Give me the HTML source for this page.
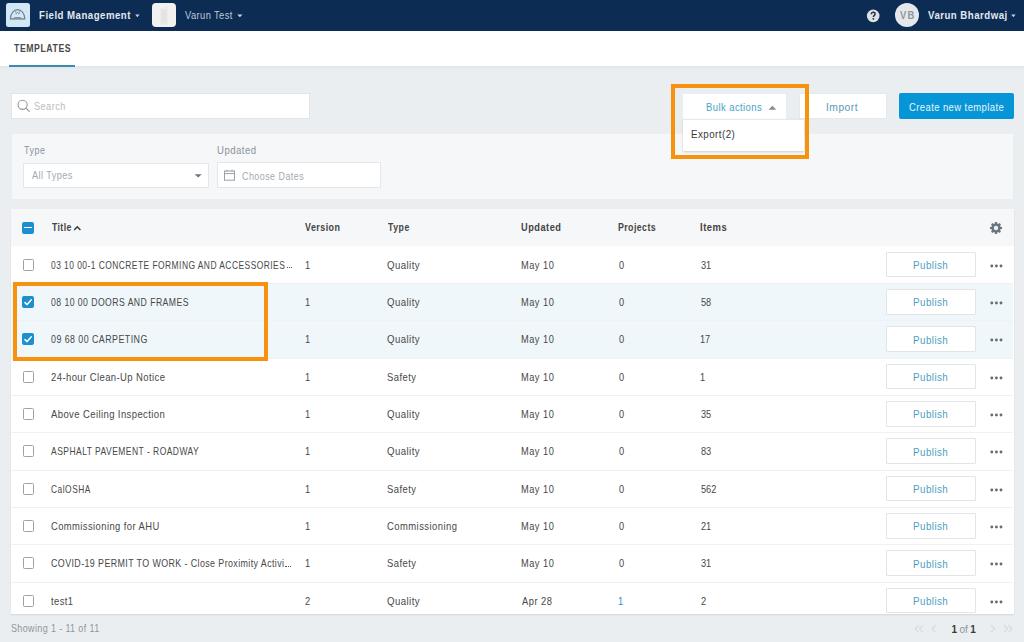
<!DOCTYPE html>
<html><head><meta charset="utf-8">
<style>
*{box-sizing:border-box;margin:0;padding:0}
html,body{width:1024px;height:642px;overflow:hidden;background:#ebeef1;font-family:"Liberation Sans",sans-serif;color:#3c3c3c;position:relative}
.b{position:absolute}
.t{position:absolute;white-space:nowrap;line-height:1;transform-origin:0 0}
#clip{position:absolute;left:0;top:0;width:1024px;height:612.6px;overflow:hidden}
</style></head><body>
<div class="b" style="left:0;top:0;width:1024px;height:31px;background:#0c2c54"></div>
<div class="b" style="left:6px;top:3px;width:24px;height:24px;background:#d2e8f6;border-radius:2.5px"></div>
<svg class="b" style="left:6px;top:3px" width="24" height="24" viewBox="0 0 24 24"><path d="M4.4 15.4 C4.8 10.2 7.8 6.6 11.6 6.6 C15.4 6.6 18.4 10.2 18.8 15.4" fill="none" stroke="#6f7d88" stroke-width="1.1"/><path d="M9.6 7.2 L10.2 11.2 L11.6 9.4 L13 11.2 L13.6 7.2" fill="none" stroke="#8d99a3" stroke-width="0.9"/><path d="M3.8 15.9 L19.4 15.9" stroke="#6f7d88" stroke-width="1.3"/><path d="M8.2 14.6 L15 14.6" stroke="#7f8b95" stroke-width="1"/></svg>
<svg class="b" style="left:134.5px;top:14px" width="5" height="4" viewBox="0 0 5 4"><path d="M0.2 0.6 L4.6 0.6 L2.4 3.2Z" fill="#c7d2de"/></svg>
<div class="b" style="left:152px;top:3px;width:24px;height:24px;background:#f3f1ef;border-radius:4px"></div>
<svg class="b" style="left:152px;top:3px" width="24" height="24" viewBox="0 0 24 24"><rect x="8.5" y="5.5" width="7" height="16" fill="#e9e6e6"/><rect x="12" y="3.5" width="3.5" height="2" fill="#ebe8e8"/><path d="M9.5 8 H14.5 M9.5 10.5 H14.5 M9.5 13 H14.5 M9.5 15.5 H14.5 M9.5 18 H14.5" stroke="#dedbdc" stroke-width="0.8"/></svg>
<svg class="b" style="left:236.5px;top:14px" width="6" height="4" viewBox="0 0 6 4"><path d="M0.3 0.6 L5.5 0.6 L2.9 3.2Z" fill="#c7d2de"/></svg>
<svg class="b" style="left:866px;top:9px" width="14" height="14" viewBox="0 0 14 14"><circle cx="7.2" cy="6.9" r="6.3" fill="#dde2e7"/><path d="M5.3 5.2 C5.3 3.9 6.2 3.3 7.2 3.3 C8.3 3.3 9.1 4 9.1 5 C9.1 6.3 7.5 6.5 7.4 8" fill="none" stroke="#2a3140" stroke-width="1.5"/><rect x="6.55" y="9" width="1.6" height="1.6" fill="#2a3140"/></svg>
<div class="b" style="left:895px;top:3px;width:24px;height:24px;border-radius:50%;background:#e4e8eb"></div>
<svg class="b" style="left:1011px;top:14px" width="5" height="4" viewBox="0 0 5 4"><path d="M0.2 0.6 L4.6 0.6 L2.4 3.2Z" fill="#c7d2de"/></svg>

<div class="b" style="left:0;top:31px;width:1024px;height:35px;background:#fff"></div>
<div class="b" style="left:0;top:66px;width:1024px;height:5px;background:linear-gradient(#e3e6e9,#ebeef1)"></div>
<div class="b" style="left:9px;top:64.6px;width:66.2px;height:2px;background:#3b8cb0"></div>

<div class="b" style="left:11.4px;top:93.2px;width:298.6px;height:26.3px;background:#fff;border:1px solid #e2e5e8"></div>
<svg class="b" style="left:16px;top:98px" width="16" height="16" viewBox="0 0 16 16"><circle cx="6.6" cy="6.8" r="4.6" fill="none" stroke="#93989d" stroke-width="1.1"/><path d="M9.9 10.1 L13.6 13.6" stroke="#93989d" stroke-width="1.3"/></svg>

<div class="b" style="left:683px;top:94px;width:103.3px;height:25px;background:#fff"></div>
<svg class="b" style="left:767.5px;top:105px" width="9" height="6" viewBox="0 0 9 6"><path d="M0.5 4.8 L8.3 4.8 L4.4 0.8Z" fill="#858d94"/></svg>
<div class="b" style="left:798.8px;top:93.3px;width:88.5px;height:25.6px;background:#fff;border:1px solid #e6e9ec"></div>
<div class="b" style="left:898.7px;top:93.4px;width:115px;height:25.9px;background:#0696d7;border-radius:2px"></div>

<div class="b" style="left:12px;top:133.5px;width:1001.3px;height:65.3px;background:#f5f7f9"></div>
<div class="b" style="left:23.4px;top:162.5px;width:185.9px;height:25.8px;background:#fff;border:1px solid #e3e6ea"></div>
<svg class="b" style="left:194px;top:173px" width="9" height="6" viewBox="0 0 9 6"><path d="M0.6 1.2 L7.8 1.2 L4.2 4.6Z" fill="#6f777e"/></svg>
<div class="b" style="left:217px;top:162.4px;width:164px;height:25.6px;background:#fff;border:1px solid #e3e6ea"></div>
<svg class="b" style="left:223px;top:169px" width="13" height="13" viewBox="0 0 13 13"><rect x="1.5" y="2" width="10" height="9.2" fill="none" stroke="#9aa0a6" stroke-width="1"/><path d="M1.5 4.6 L11.5 4.6 M4 0.8 L4 2.8 M9 0.8 L9 2.8" stroke="#9aa0a6" stroke-width="1"/></svg>

<div class="b" style="left:11px;top:208.5px;width:1002.6px;height:405.5px;background:#fff;box-shadow:0 1px 1.5px rgba(0,0,0,0.10)"></div>
<div class="b" style="left:11px;top:208.5px;width:1002.6px;height:37.5px;background:#f6f7f9"></div>
<div id="clip">
<div class="b" style="left:11px;top:283.333px;width:1002px;height:37.333px;background:#eff7fb"></div>
<div class="b" style="left:11px;top:282.833px;width:1002px;height:1px;background:#eff1f3"></div>
<div class="b" style="left:11px;top:320.667px;width:1002px;height:37.333px;background:#eff7fb"></div>
<div class="b" style="left:11px;top:320.167px;width:1002px;height:1px;background:#eff1f3"></div>
<div class="b" style="left:11px;top:357.500px;width:1002px;height:1px;background:#eff1f3"></div>
<div class="b" style="left:11px;top:394.833px;width:1002px;height:1px;background:#eff1f3"></div>
<div class="b" style="left:11px;top:432.167px;width:1002px;height:1px;background:#eff1f3"></div>
<div class="b" style="left:11px;top:469.500px;width:1002px;height:1px;background:#eff1f3"></div>
<div class="b" style="left:11px;top:506.833px;width:1002px;height:1px;background:#eff1f3"></div>
<div class="b" style="left:11px;top:544.166px;width:1002px;height:1px;background:#eff1f3"></div>
<div class="b" style="left:11px;top:581.500px;width:1002px;height:1px;background:#eff1f3"></div>
<div class="b" style="left:22.5px;top:258.80px;width:11.8px;height:11.8px;border:1.1px solid #9da2a7;border-radius:1.5px;background:#fff"></div>
<div class="b" style="left:22.3px;top:296.13px;width:11.8px;height:11.8px;background:#1b8fd0;border-radius:2px"><svg width="12" height="12" viewBox="0 0 12 12" style="position:absolute;left:0;top:0"><path d="M3 6.6 L5.1 8.6 L9.3 3.8" fill="none" stroke="#fff" stroke-width="1.5" stroke-linecap="round" stroke-linejoin="round"/></svg></div>
<div class="b" style="left:22.3px;top:333.47px;width:11.8px;height:11.8px;background:#1b8fd0;border-radius:2px"><svg width="12" height="12" viewBox="0 0 12 12" style="position:absolute;left:0;top:0"><path d="M3 6.6 L5.1 8.6 L9.3 3.8" fill="none" stroke="#fff" stroke-width="1.5" stroke-linecap="round" stroke-linejoin="round"/></svg></div>
<div class="b" style="left:22.5px;top:370.80px;width:11.8px;height:11.8px;border:1.1px solid #9da2a7;border-radius:1.5px;background:#fff"></div>
<div class="b" style="left:22.5px;top:408.13px;width:11.8px;height:11.8px;border:1.1px solid #9da2a7;border-radius:1.5px;background:#fff"></div>
<div class="b" style="left:22.5px;top:445.47px;width:11.8px;height:11.8px;border:1.1px solid #9da2a7;border-radius:1.5px;background:#fff"></div>
<div class="b" style="left:22.5px;top:482.80px;width:11.8px;height:11.8px;border:1.1px solid #9da2a7;border-radius:1.5px;background:#fff"></div>
<div class="b" style="left:22.5px;top:520.13px;width:11.8px;height:11.8px;border:1.1px solid #9da2a7;border-radius:1.5px;background:#fff"></div>
<div class="b" style="left:22.5px;top:557.47px;width:11.8px;height:11.8px;border:1.1px solid #9da2a7;border-radius:1.5px;background:#fff"></div>
<div class="b" style="left:22.5px;top:594.80px;width:11.8px;height:11.8px;border:1.1px solid #9da2a7;border-radius:1.5px;background:#fff"></div>
<div class="b" style="left:886px;top:251.70px;width:89.5px;height:25.8px;border:1px solid #e1e5e8;border-radius:1px;background:#fff"></div>
<svg class="b" style="left:988px;top:261.70px" width="16" height="8" viewBox="0 0 16 8"><g fill="#676c72"><circle cx="3.8" cy="4" r="1.45"/><circle cx="8.4" cy="4" r="1.45"/><circle cx="13" cy="4" r="1.45"/></g></svg>
<div class="b" style="left:886px;top:289.03px;width:89.5px;height:25.8px;border:1px solid #e1e5e8;border-radius:1px;background:#fff"></div>
<svg class="b" style="left:988px;top:299.03px" width="16" height="8" viewBox="0 0 16 8"><g fill="#676c72"><circle cx="3.8" cy="4" r="1.45"/><circle cx="8.4" cy="4" r="1.45"/><circle cx="13" cy="4" r="1.45"/></g></svg>
<div class="b" style="left:886px;top:326.37px;width:89.5px;height:25.8px;border:1px solid #e1e5e8;border-radius:1px;background:#fff"></div>
<svg class="b" style="left:988px;top:336.37px" width="16" height="8" viewBox="0 0 16 8"><g fill="#676c72"><circle cx="3.8" cy="4" r="1.45"/><circle cx="8.4" cy="4" r="1.45"/><circle cx="13" cy="4" r="1.45"/></g></svg>
<div class="b" style="left:886px;top:363.70px;width:89.5px;height:25.8px;border:1px solid #e1e5e8;border-radius:1px;background:#fff"></div>
<svg class="b" style="left:988px;top:373.70px" width="16" height="8" viewBox="0 0 16 8"><g fill="#676c72"><circle cx="3.8" cy="4" r="1.45"/><circle cx="8.4" cy="4" r="1.45"/><circle cx="13" cy="4" r="1.45"/></g></svg>
<div class="b" style="left:886px;top:401.03px;width:89.5px;height:25.8px;border:1px solid #e1e5e8;border-radius:1px;background:#fff"></div>
<svg class="b" style="left:988px;top:411.03px" width="16" height="8" viewBox="0 0 16 8"><g fill="#676c72"><circle cx="3.8" cy="4" r="1.45"/><circle cx="8.4" cy="4" r="1.45"/><circle cx="13" cy="4" r="1.45"/></g></svg>
<div class="b" style="left:886px;top:438.37px;width:89.5px;height:25.8px;border:1px solid #e1e5e8;border-radius:1px;background:#fff"></div>
<svg class="b" style="left:988px;top:448.37px" width="16" height="8" viewBox="0 0 16 8"><g fill="#676c72"><circle cx="3.8" cy="4" r="1.45"/><circle cx="8.4" cy="4" r="1.45"/><circle cx="13" cy="4" r="1.45"/></g></svg>
<div class="b" style="left:886px;top:475.70px;width:89.5px;height:25.8px;border:1px solid #e1e5e8;border-radius:1px;background:#fff"></div>
<svg class="b" style="left:988px;top:485.70px" width="16" height="8" viewBox="0 0 16 8"><g fill="#676c72"><circle cx="3.8" cy="4" r="1.45"/><circle cx="8.4" cy="4" r="1.45"/><circle cx="13" cy="4" r="1.45"/></g></svg>
<div class="b" style="left:886px;top:513.03px;width:89.5px;height:25.8px;border:1px solid #e1e5e8;border-radius:1px;background:#fff"></div>
<svg class="b" style="left:988px;top:523.03px" width="16" height="8" viewBox="0 0 16 8"><g fill="#676c72"><circle cx="3.8" cy="4" r="1.45"/><circle cx="8.4" cy="4" r="1.45"/><circle cx="13" cy="4" r="1.45"/></g></svg>
<div class="b" style="left:886px;top:550.37px;width:89.5px;height:25.8px;border:1px solid #e1e5e8;border-radius:1px;background:#fff"></div>
<svg class="b" style="left:988px;top:560.37px" width="16" height="8" viewBox="0 0 16 8"><g fill="#676c72"><circle cx="3.8" cy="4" r="1.45"/><circle cx="8.4" cy="4" r="1.45"/><circle cx="13" cy="4" r="1.45"/></g></svg>
<div class="b" style="left:886px;top:587.70px;width:89.5px;height:25.8px;border:1px solid #e1e5e8;border-radius:1px;background:#fff"></div>
<svg class="b" style="left:988px;top:597.70px" width="16" height="8" viewBox="0 0 16 8"><g fill="#676c72"><circle cx="3.8" cy="4" r="1.45"/><circle cx="8.4" cy="4" r="1.45"/><circle cx="13" cy="4" r="1.45"/></g></svg>
</div>
<div class="b" style="left:22.3px;top:221.8px;width:11.8px;height:12px;background:#1b8fd0;border-radius:2px"></div>
<div class="b" style="left:24.4px;top:226.8px;width:7.6px;height:1.6px;background:#fff"></div>
<svg class="b" style="left:73px;top:224.6px" width="9" height="7" viewBox="0 0 9 7"><path d="M1.2 5 L4.3 1.8 L7.4 5" fill="none" stroke="#3a3a3a" stroke-width="1.5"/></svg>
<svg class="b" style="left:989.2px;top:220.6px" width="14" height="14" viewBox="0 0 14 14"><g fill="#6b7480" transform="translate(7 7)"><circle r="4.3"/><path d="M-1 -6 L1 -6 L1.6 -3.5 L-1.6 -3.5Z"/><path d="M-1 -6 L1 -6 L1.6 -3.5 L-1.6 -3.5Z" transform="rotate(45)"/><path d="M-1 -6 L1 -6 L1.6 -3.5 L-1.6 -3.5Z" transform="rotate(90)"/><path d="M-1 -6 L1 -6 L1.6 -3.5 L-1.6 -3.5Z" transform="rotate(135)"/><path d="M-1 -6 L1 -6 L1.6 -3.5 L-1.6 -3.5Z" transform="rotate(180)"/><path d="M-1 -6 L1 -6 L1.6 -3.5 L-1.6 -3.5Z" transform="rotate(225)"/><path d="M-1 -6 L1 -6 L1.6 -3.5 L-1.6 -3.5Z" transform="rotate(270)"/><path d="M-1 -6 L1 -6 L1.6 -3.5 L-1.6 -3.5Z" transform="rotate(315)"/></g><circle cx="7" cy="7" r="2.2" fill="#eef2f5"/></svg>

<div class="b" style="left:682.5px;top:119px;width:121.5px;height:31.5px;background:#fff;box-shadow:0 1px 2px rgba(0,0,0,0.18)"></div>
<div class="b" style="left:682.5px;top:118.6px;width:121.5px;height:1px;background:#e6e9ec"></div>

<div class="t" style="left:38.82px;top:10.24px;font-size:11px;color:#e3e9f0;font-weight:bold;transform:scaleX(0.8769);letter-spacing:0.552px">Field Management</div>
<div class="t" style="left:185.20px;top:11.17px;font-size:10.2px;color:#bfcbd9;transform:scaleX(0.9119);letter-spacing:0.464px">Varun Test</div>
<div class="t" style="left:928.00px;top:10.39px;font-size:11px;color:#e3e9f0;font-weight:bold;transform:scaleX(0.8766);letter-spacing:0.551px">Varun Bhardwaj</div>
<div class="t" style="left:900.00px;top:10.36px;font-size:10.8px;color:#8f989e;font-weight:bold;transform:scaleX(0.8727);letter-spacing:1.265px">VB</div>
<div class="t" style="left:14.01px;top:44.10px;font-size:10.4px;color:#4a4a4a;font-weight:bold;transform:scaleX(0.8392);letter-spacing:0.671px">TEMPLATES</div>
<div class="t" style="left:34.24px;top:102.13px;font-size:10px;color:#b5bbc1;transform:scaleX(0.9103);letter-spacing:0.534px">Search</div>
<div class="t" style="left:705.84px;top:102.97px;font-size:10.2px;color:#4aa2c7;transform:scaleX(0.9358);letter-spacing:0.426px">Bulk actions</div>
<div class="t" style="left:826.07px;top:102.97px;font-size:10.2px;color:#5b9ab8;transform:scaleX(1.0083);letter-spacing:0.487px">Import</div>
<div class="t" style="left:908.53px;top:102.58px;font-size:10.3px;color:#e6f5fd;transform:scaleX(0.9185);letter-spacing:0.455px">Create new template</div>
<div class="t" style="left:23.62px;top:146.17px;font-size:10.2px;color:#8c949b;transform:scaleX(0.8756);letter-spacing:0.624px">Type</div>
<div class="t" style="left:31.60px;top:170.87px;font-size:10.2px;color:#a3aab0;transform:scaleX(0.9048);letter-spacing:0.446px">All Types</div>
<div class="t" style="left:216.83px;top:146.17px;font-size:10.2px;color:#8c949b;transform:scaleX(0.9378);letter-spacing:0.540px">Updated</div>
<div class="t" style="left:241.55px;top:171.87px;font-size:10.2px;color:#a3aab0;transform:scaleX(0.8793);letter-spacing:0.505px">Choose Dates</div>
<div class="t" style="left:51.61px;top:222.95px;font-size:10.1px;color:#444444;font-weight:bold;transform:scaleX(0.8647);letter-spacing:0.439px">Title</div>
<div class="t" style="left:305.30px;top:223.25px;font-size:10.1px;color:#444444;font-weight:bold;transform:scaleX(0.8822);letter-spacing:0.520px">Version</div>
<div class="t" style="left:387.61px;top:223.25px;font-size:10.1px;color:#444444;font-weight:bold;transform:scaleX(0.8603);letter-spacing:0.651px">Type</div>
<div class="t" style="left:521.05px;top:223.25px;font-size:10.1px;color:#444444;font-weight:bold;transform:scaleX(0.9134);letter-spacing:0.568px">Updated</div>
<div class="t" style="left:618.47px;top:223.25px;font-size:10.1px;color:#444444;font-weight:bold;transform:scaleX(0.8706);letter-spacing:0.483px">Projects</div>
<div class="t" style="left:700.43px;top:223.25px;font-size:10.1px;color:#444444;font-weight:bold;transform:scaleX(0.9376);letter-spacing:0.552px">Items</div>
<div class="t" style="left:11.34px;top:624.47px;font-size:10.2px;color:#8f969d;transform:scaleX(0.8830);letter-spacing:0.417px">Showing 1 - 11 of 11</div>
<div class="t" style="left:691.11px;top:129.85px;font-size:10.1px;color:#3a3a3a;transform:scaleX(0.9729);letter-spacing:0.437px">Export(2)</div>
<div class="t" style="left:50.95px;top:260.55px;font-size:10.1px;color:#484848;transform:scaleX(0.8371);letter-spacing:0.533px">03 10 00-1 CONCRETE FORMING AND ACCESSORIES</div>
<div class="t" style="left:304.90px;top:260.64px;font-size:10px;color:#484848;transform:scaleX(0.92)">1</div>
<div class="t" style="left:387.11px;top:260.55px;font-size:10.1px;color:#484848;transform:scaleX(0.9547);letter-spacing:0.450px">Quality</div>
<div class="t" style="left:520.86px;top:260.55px;font-size:10.1px;color:#484848;transform:scaleX(0.9157);letter-spacing:0.556px">May 10</div>
<div class="t" style="left:618.70px;top:260.64px;font-size:10px;color:#484848;transform:scaleX(0.92)">0</div>
<div class="t" style="left:700.70px;top:260.64px;font-size:10px;color:#484848;transform:scaleX(0.92)">31</div>
<div class="t" style="left:912.82px;top:261.15px;font-size:10.1px;color:#4e9ec2;transform:scaleX(0.9707);letter-spacing:0.460px">Publish</div>
<div class="t" style="left:50.94px;top:297.88px;font-size:10.1px;color:#484848;transform:scaleX(0.8576);letter-spacing:0.534px">08 10 00 DOORS AND FRAMES</div>
<div class="t" style="left:304.90px;top:297.97px;font-size:10px;color:#484848;transform:scaleX(0.92)">1</div>
<div class="t" style="left:387.11px;top:297.88px;font-size:10.1px;color:#484848;transform:scaleX(0.9547);letter-spacing:0.450px">Quality</div>
<div class="t" style="left:520.86px;top:297.88px;font-size:10.1px;color:#484848;transform:scaleX(0.9157);letter-spacing:0.556px">May 10</div>
<div class="t" style="left:618.70px;top:297.97px;font-size:10px;color:#484848;transform:scaleX(0.92)">0</div>
<div class="t" style="left:700.60px;top:297.97px;font-size:10px;color:#484848;transform:scaleX(0.92)">58</div>
<div class="t" style="left:912.82px;top:298.48px;font-size:10.1px;color:#4e9ec2;transform:scaleX(0.9707);letter-spacing:0.460px">Publish</div>
<div class="t" style="left:50.93px;top:335.22px;font-size:10.1px;color:#484848;transform:scaleX(0.8781);letter-spacing:0.512px">09 68 00 CARPETING</div>
<div class="t" style="left:304.90px;top:335.30px;font-size:10px;color:#484848;transform:scaleX(0.92)">1</div>
<div class="t" style="left:387.11px;top:335.22px;font-size:10.1px;color:#484848;transform:scaleX(0.9547);letter-spacing:0.450px">Quality</div>
<div class="t" style="left:520.86px;top:335.22px;font-size:10.1px;color:#484848;transform:scaleX(0.9157);letter-spacing:0.556px">May 10</div>
<div class="t" style="left:618.70px;top:335.30px;font-size:10px;color:#484848;transform:scaleX(0.92)">0</div>
<div class="t" style="left:700.30px;top:335.30px;font-size:10px;color:#484848;transform:scaleX(0.92)">17</div>
<div class="t" style="left:912.82px;top:335.82px;font-size:10.1px;color:#4e9ec2;transform:scaleX(0.9707);letter-spacing:0.460px">Publish</div>
<div class="t" style="left:50.73px;top:372.55px;font-size:10.1px;color:#484848;transform:scaleX(0.9404);letter-spacing:0.438px">24-hour Clean-Up Notice</div>
<div class="t" style="left:304.90px;top:372.63px;font-size:10px;color:#484848;transform:scaleX(0.92)">1</div>
<div class="t" style="left:387.12px;top:372.55px;font-size:10.1px;color:#484848;transform:scaleX(0.9353);letter-spacing:0.491px">Safety</div>
<div class="t" style="left:520.86px;top:372.55px;font-size:10.1px;color:#484848;transform:scaleX(0.9157);letter-spacing:0.556px">May 10</div>
<div class="t" style="left:618.70px;top:372.63px;font-size:10px;color:#484848;transform:scaleX(0.92)">0</div>
<div class="t" style="left:700.30px;top:372.63px;font-size:10px;color:#484848;transform:scaleX(0.92)">1</div>
<div class="t" style="left:912.82px;top:373.15px;font-size:10.1px;color:#4e9ec2;transform:scaleX(0.9707);letter-spacing:0.460px">Publish</div>
<div class="t" style="left:51.20px;top:409.88px;font-size:10.1px;color:#484848;transform:scaleX(0.9424);letter-spacing:0.418px">Above Ceiling Inspection</div>
<div class="t" style="left:304.90px;top:409.97px;font-size:10px;color:#484848;transform:scaleX(0.92)">1</div>
<div class="t" style="left:387.11px;top:409.88px;font-size:10.1px;color:#484848;transform:scaleX(0.9547);letter-spacing:0.450px">Quality</div>
<div class="t" style="left:520.86px;top:409.88px;font-size:10.1px;color:#484848;transform:scaleX(0.9157);letter-spacing:0.556px">May 10</div>
<div class="t" style="left:618.70px;top:409.97px;font-size:10px;color:#484848;transform:scaleX(0.92)">0</div>
<div class="t" style="left:700.70px;top:409.97px;font-size:10px;color:#484848;transform:scaleX(0.92)">35</div>
<div class="t" style="left:912.82px;top:410.48px;font-size:10.1px;color:#4e9ec2;transform:scaleX(0.9707);letter-spacing:0.460px">Publish</div>
<div class="t" style="left:51.20px;top:447.22px;font-size:10.1px;color:#484848;transform:scaleX(0.8404);letter-spacing:0.564px">ASPHALT PAVEMENT - ROADWAY</div>
<div class="t" style="left:304.90px;top:447.30px;font-size:10px;color:#484848;transform:scaleX(0.92)">1</div>
<div class="t" style="left:387.11px;top:447.22px;font-size:10.1px;color:#484848;transform:scaleX(0.9547);letter-spacing:0.450px">Quality</div>
<div class="t" style="left:520.86px;top:447.22px;font-size:10.1px;color:#484848;transform:scaleX(0.9157);letter-spacing:0.556px">May 10</div>
<div class="t" style="left:618.70px;top:447.30px;font-size:10px;color:#484848;transform:scaleX(0.92)">0</div>
<div class="t" style="left:700.60px;top:447.30px;font-size:10px;color:#484848;transform:scaleX(0.92)">83</div>
<div class="t" style="left:912.82px;top:447.82px;font-size:10.1px;color:#4e9ec2;transform:scaleX(0.9707);letter-spacing:0.460px">Publish</div>
<div class="t" style="left:50.78px;top:484.55px;font-size:10.1px;color:#484848;transform:scaleX(0.8286);letter-spacing:0.628px">CalOSHA</div>
<div class="t" style="left:304.90px;top:484.63px;font-size:10px;color:#484848;transform:scaleX(0.92)">1</div>
<div class="t" style="left:387.12px;top:484.55px;font-size:10.1px;color:#484848;transform:scaleX(0.9353);letter-spacing:0.491px">Safety</div>
<div class="t" style="left:520.86px;top:484.55px;font-size:10.1px;color:#484848;transform:scaleX(0.9157);letter-spacing:0.556px">May 10</div>
<div class="t" style="left:618.70px;top:484.63px;font-size:10px;color:#484848;transform:scaleX(0.92)">0</div>
<div class="t" style="left:700.60px;top:484.63px;font-size:10px;color:#484848;transform:scaleX(0.92)">562</div>
<div class="t" style="left:912.82px;top:485.15px;font-size:10.1px;color:#4e9ec2;transform:scaleX(0.9707);letter-spacing:0.460px">Publish</div>
<div class="t" style="left:50.73px;top:521.88px;font-size:10.1px;color:#484848;transform:scaleX(0.9293);letter-spacing:0.463px">Commissioning for AHU</div>
<div class="t" style="left:304.90px;top:521.97px;font-size:10px;color:#484848;transform:scaleX(0.92)">1</div>
<div class="t" style="left:387.03px;top:521.88px;font-size:10.1px;color:#484848;transform:scaleX(0.9340);letter-spacing:0.493px">Commissioning</div>
<div class="t" style="left:520.86px;top:521.88px;font-size:10.1px;color:#484848;transform:scaleX(0.9157);letter-spacing:0.556px">May 10</div>
<div class="t" style="left:618.70px;top:521.97px;font-size:10px;color:#484848;transform:scaleX(0.92)">0</div>
<div class="t" style="left:700.50px;top:521.97px;font-size:10px;color:#484848;transform:scaleX(0.92)">21</div>
<div class="t" style="left:912.82px;top:522.48px;font-size:10.1px;color:#4e9ec2;transform:scaleX(0.9707);letter-spacing:0.460px">Publish</div>
<div class="t" style="left:50.76px;top:559.22px;font-size:10.1px;color:#484848;transform:scaleX(0.8809);letter-spacing:0.450px">COVID-19 PERMIT TO WORK - Close Proximity Activi</div>
<div class="t" style="left:304.90px;top:559.30px;font-size:10px;color:#484848;transform:scaleX(0.92)">1</div>
<div class="t" style="left:387.12px;top:559.22px;font-size:10.1px;color:#484848;transform:scaleX(0.9353);letter-spacing:0.491px">Safety</div>
<div class="t" style="left:520.86px;top:559.22px;font-size:10.1px;color:#484848;transform:scaleX(0.9157);letter-spacing:0.556px">May 10</div>
<div class="t" style="left:618.70px;top:559.30px;font-size:10px;color:#484848;transform:scaleX(0.92)">0</div>
<div class="t" style="left:700.70px;top:559.30px;font-size:10px;color:#484848;transform:scaleX(0.92)">31</div>
<div class="t" style="left:912.82px;top:559.82px;font-size:10.1px;color:#4e9ec2;transform:scaleX(0.9707);letter-spacing:0.460px">Publish</div>
<div class="t" style="left:51.11px;top:596.55px;font-size:10.1px;color:#484848;transform:scaleX(0.9274);letter-spacing:0.464px">test1</div>
<div class="t" style="left:305.10px;top:596.63px;font-size:10px;color:#484848;transform:scaleX(0.92)">2</div>
<div class="t" style="left:387.11px;top:596.55px;font-size:10.1px;color:#484848;transform:scaleX(0.9547);letter-spacing:0.450px">Quality</div>
<div class="t" style="left:521.60px;top:596.55px;font-size:10.1px;color:#484848;transform:scaleX(0.9265);letter-spacing:0.511px">Apr 28</div>
<div class="t" style="left:618.30px;top:596.63px;font-size:10px;color:#1a8fd0;transform:scaleX(0.92)">1</div>
<div class="t" style="left:700.50px;top:596.63px;font-size:10px;color:#484848;transform:scaleX(0.92)">2</div>
<div class="t" style="left:912.82px;top:597.15px;font-size:10.1px;color:#4e9ec2;transform:scaleX(0.9707);letter-spacing:0.460px">Publish</div>
<div class="b" style="left:286.70px;top:267.00px;width:1.3px;height:1.3px;background:#555"></div>
<div class="b" style="left:288.80px;top:267.00px;width:1.3px;height:1.3px;background:#555"></div>
<div class="b" style="left:290.90px;top:267.00px;width:1.3px;height:1.3px;background:#555"></div>
<div class="b" style="left:285.40px;top:565.67px;width:1.3px;height:1.3px;background:#555"></div>
<div class="b" style="left:287.50px;top:565.67px;width:1.3px;height:1.3px;background:#555"></div>
<div class="b" style="left:289.60px;top:565.67px;width:1.3px;height:1.3px;background:#555"></div>

<svg class="b" style="left:910px;top:622px" width="110" height="14" viewBox="0 0 110 14"><g fill="none" stroke="#d3d8dc" stroke-width="1.1"><path d="M8.6 3.2 L5 6.8 L8.6 10.4 M13 3.2 L9.4 6.8 L13 10.4"/><path d="M25.6 3.2 L22 6.8 L25.6 10.4"/><path d="M81 3.2 L84.6 6.8 L81 10.4"/><path d="M94 3.2 L97.6 6.8 L94 10.4 M98.4 3.2 L102 6.8 L98.4 10.4"/></g></svg>
<div class="t" style="left:951.6px;top:625px;font-size:10px;color:#3a3a3a;word-spacing:-0.4px"><b>1</b> <span style="color:#8a9299">of</span> <b>1</b></div>

<div class="b" style="left:671.3px;top:84.4px;width:137.5px;height:75px;border:4.4px solid #f7920e"></div>
<div class="b" style="left:12.6px;top:282px;width:255px;height:79px;border:4.3px solid #f7920e"></div>
</body></html>
